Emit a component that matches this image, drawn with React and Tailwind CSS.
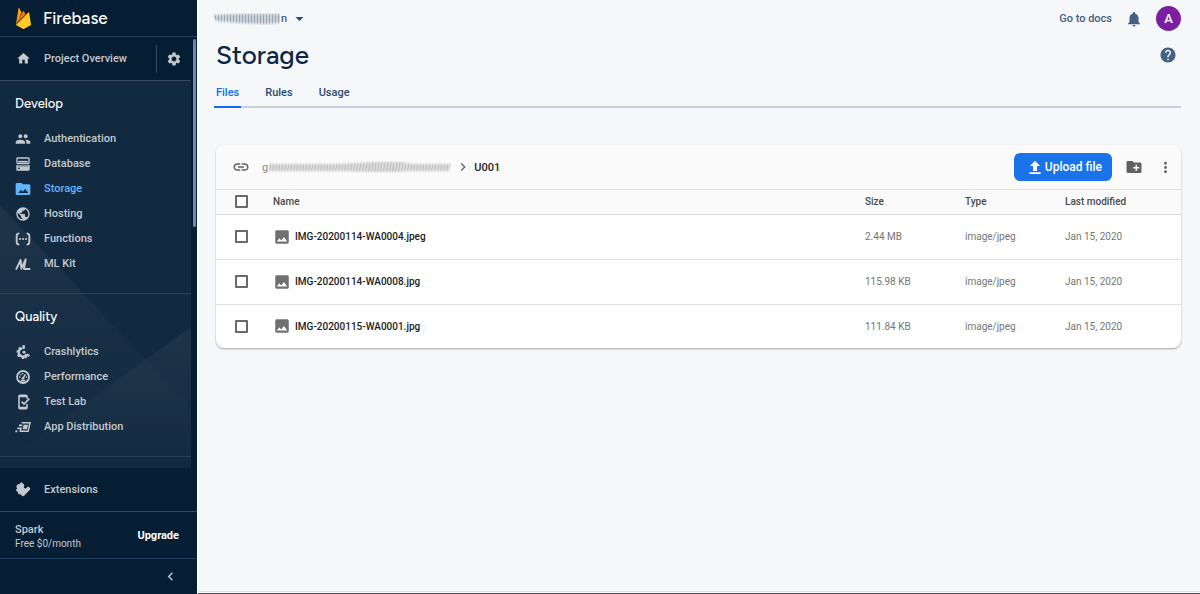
import {
  MdArrowDropDown,
  MdChevronLeft,
  MdChevronRight,
  MdCreateNewFolder,
  MdHelp,
  MdHome,
  MdImage,
  MdLink,
  MdMoreVert,
  MdNotifications,
  MdPeople,
  MdPublic,
  MdSettings,
} from 'react-icons/md'

function Icon({ children }) {
  return (
    <svg viewBox="0 0 24 24" width="16" height="16" fill="none" stroke="currentColor" strokeWidth="2" aria-hidden="true">
      {children}
    </svg>
  )
}

const DatabaseIcon = () => (
  <Icon>
    <rect x="3" y="3" width="18" height="8" rx="1" />
    <path d="M5 8.5h14" strokeWidth="2.5" />
    <rect x="2" y="13" width="20" height="9" rx="1.5" fill="currentColor" stroke="none" />
    <path d="M4 14.8h16" stroke="#122a40" strokeWidth="1" />
    <circle cx="6" cy="18.5" r="1.4" fill="#122a40" stroke="none" />
  </Icon>
)

const StorageIcon = () => (
  <Icon>
    <path d="M10 3H3a2 2 0 0 0-2 2v14a2 2 0 0 0 2 2h18a2 2 0 0 0 2-2V7a2 2 0 0 0-2-2h-9z" fill="currentColor" stroke="none" />
    <path d="M5 18l3.8-5 2.7 3.2L15.2 11.5 20 18z" fill="#122a40" stroke="none" />
  </Icon>
)

const FunctionsIcon = () => (
  <Icon>
    <path d="M6.5 3.5c-3 0-4 1.5-4 4v9c0 2.5 1 4 4 4M17.5 3.5c3 0 4 1.5 4 4v9c0 2.5-1 4-4 4" strokeWidth="2.8" />
    <path d="M6.3 12h2.4M10.8 12h2.4M15.3 12h2.4" strokeWidth="3" />
  </Icon>
)

const MlKitIcon = () => (
  <Icon>
    <path d="M1.5 20.5 8.500 6 9.500 19l6.500-14-2.500 14.500H23" strokeWidth="2.900" strokeLinejoin="round" />
  </Icon>
)

const CrashlyticsIcon = () => (
  <Icon>
    <path d="M11 6.500a6.200 6.200 0 1 0 6.500 8.500" strokeWidth="3.500" />
    <path d="M11.500 4.500h3M6.500 5l1 2M2.500 11h3M4 18.500l3-2M12 22.500v-4M17 21l-1.500-3M21.500 18 18 16" strokeWidth="3.600" />
    <path d="M13 1.500v6" strokeWidth="3" />
    <circle cx="13.500" cy="12.500" r="2.200" fill="currentColor" stroke="none" />
  </Icon>
)

const PerformanceIcon = () => (
  <Icon>
    <circle cx="12" cy="12" r="9" strokeWidth="2.700" />
    <path d="M8.500 17.500h7M12 14l3.500-6" strokeWidth="2.400" />
    <circle cx="12" cy="14" r="2" fill="currentColor" stroke="none" />
    <path d="M6 12h2M8 8l1.500 1.500M11.500 6v2M16.500 12H18" strokeWidth="2" />
  </Icon>
)

const TestLabIcon = () => (
  <Icon>
    <path d="M18 7V3.500A1.500 1.500 0 0 0 16.500 2h-9A1.500 1.500 0 0 0 6 3.500v17A1.500 1.500 0 0 0 7.500 22h9a1.500 1.500 0 0 0 1.500-1.500V15" strokeWidth="2.400" />
    <path d="M6 3.500h12M6 20.500h12" strokeWidth="2.500" />
    <path d="m10 11.500 3.500 3.500L21.500 7" strokeWidth="2.600" />
  </Icon>
)

const AppDistributionIcon = () => (
  <Icon>
    <path d="M10 5.500h12.500l-2.800 13H8l.7-3.500" strokeWidth="2.300" />
    <path d="M6 9.500h5M3.500 14H10" strokeWidth="2.400" />
    <path d="M13 8.500h6.500l-1.600 7h-6.500z" fill="currentColor" stroke="none" />
    <path d="M.5 18.500h3" strokeWidth="2.800" />
  </Icon>
)

const ExtensionsIcon = () => (
  <Icon>
    <path
      d="M3 5a2.400 2.400 0 0 1 4-1.200A2.600 2.600 0 0 1 12 2.500c1.200.3 2 1.200 2 2.500l-.8 2.500c.3 1.800 2 2.600 3.600 1.700l2-1.900c.8-.6 1.600-.4 2.200.3l1.500 1.800c.6.8.5 1.500-.1 2.200L13.700 20.800c-.9.900-2.300.9-3.200 0l-2.300-2.300c-1.800.8-4-.6-3.700-2.800L2 13.200c-.7-.8-.7-1.700 0-2.400l1.600-1.600C1.500 8.500 1.800 6 3 5z"
      fill="currentColor"
      stroke="none"
    />
  </Icon>
)

const UploadIcon = () => (
  <svg viewBox="0 0 24 24" width="16" height="16" fill="currentColor" aria-hidden="true">
    <path d="M12 2.500 4.500 10.500H9V18h6v-7.500h4.500zM3.500 20h17v2.500h-17z" />
  </svg>
)

const FirebaseLogo = () => (
  <svg viewBox="0 0 24 24" width="21" height="21" aria-hidden="true">
    <path fill="#ffa000" d="M3.316 19.365L6.255.461A.542.542 0 0 1 7.270.288l2.543 4.771z" />
    <path fill="#f57c00" d="M14.300 7.147l-1.820-3.482a.542.542 0 0 0-.96 0L3.530 17.984z" />
    <path fill="#ffca28" d="M20.684 19.364l-2.250-14a.54.54 0 0 0-.919-.295L3.316 19.365l7.856 4.427a1.621 1.621 0 0 0 1.588 0z" />
  </svg>
)

// hatched strokes that hide the private names
function Smudge({ id, width, color, slant = 0, path }) {
  return (
    <svg width={width} height="14" viewBox={`0 0 ${width} 14`} aria-hidden="true">
      <defs>
        <pattern id={id} width="3" height="14" patternUnits="userSpaceOnUse" patternTransform={`skewX(${slant})`}>
          <rect width="3" height="14" fill={color} opacity="0.3" />
          <rect width="1" height="14" fill={color} opacity="0.55" />
        </pattern>
        <filter id={`${id}-soft`}>
          <feGaussianBlur stdDeviation="0.4 0.9" />
        </filter>
      </defs>
      <path d={path} fill={`url(#${id})`} filter={`url(#${id}-soft)`} />
    </svg>
  )
}

const sections = [
  {
    title: 'Develop',
    items: [
      { name: 'Authentication', icon: <MdPeople size={16} /> },
      { name: 'Database', icon: <DatabaseIcon /> },
      { name: 'Storage', icon: <StorageIcon />, active: true },
      { name: 'Hosting', icon: <MdPublic size={16} /> },
      { name: 'Functions', icon: <FunctionsIcon /> },
      { name: 'ML Kit', icon: <MlKitIcon /> },
    ],
  },
  {
    title: 'Quality',
    items: [
      { name: 'Crashlytics', icon: <CrashlyticsIcon /> },
      { name: 'Performance', icon: <PerformanceIcon /> },
      { name: 'Test Lab', icon: <TestLabIcon /> },
      { name: 'App Distribution', icon: <AppDistributionIcon /> },
    ],
  },
]

const files = [
  { name: 'IMG-20200114-WA0004.jpeg', size: '2.44 MB', type: 'image/jpeg', modified: 'Jan 15, 2020' },
  { name: 'IMG-20200114-WA0008.jpg', size: '115.98 KB', type: 'image/jpeg', modified: 'Jan 15, 2020' },
  { name: 'IMG-20200115-WA0001.jpg', size: '111.84 KB', type: 'image/jpeg', modified: 'Jan 15, 2020' },
]

function SidebarBackdrop() {
  return (
    <svg className="absolute inset-0 h-full w-full" viewBox="0 0 191 387" preserveAspectRatio="none" aria-hidden="true">
      <defs>
        <linearGradient id="facet" x1="0" y1="0" x2="0" y2="1">
          <stop offset="0" stopColor="#fff" stopOpacity="0.045" />
          <stop offset="1" stopColor="#fff" stopOpacity="0" />
        </linearGradient>
      </defs>
      <path d="M0 124 191 327v60H0z" fill="url(#facet)" />
      <path d="M191 246v141H0v-4z" fill="url(#facet)" />
    </svg>
  )
}

function Sidebar() {
  return (
    <aside className="flex w-[198px] shrink-0 flex-col border-r border-white bg-[#051e34] text-[#c3c9cf]">
      <a href="#" className="flex h-[37px] items-center gap-[9px] border-b border-[#223f5c] pl-[13px] text-white">
        <FirebaseLogo />
        <span className="font-['Figtree','Lato',sans-serif] text-[17px] font-medium">Firebase</span>
      </a>

      <div className="flex">
        <nav className="min-w-0 flex-1">
          <div className="flex h-11 items-center border-b border-[#37495a]">
            <a href="#" className="flex flex-1 items-center gap-[13px] pl-[15px]">
              <span className="flex w-4 justify-center"><MdHome size={15} /></span>
              Project Overview
            </a>
            <button className="flex h-7 w-[35px] items-center justify-center border-l border-[#37495a]" aria-label="Settings">
              <MdSettings size={16} />
            </button>
          </div>

          <div className="relative bg-[#122a40] pb-[11px]">
            <SidebarBackdrop />
            {sections.map((section) => (
              <div key={section.title} className="relative border-b border-[#264059] pb-[17px]">
                <h2 className="h-[45px] pt-[11px] pl-[15px] font-['Figtree','Lato',sans-serif] text-[13px] leading-6 font-medium text-white">
                  {section.title}
                </h2>
                {section.items.map((item) => (
                  <a
                    key={item.name}
                    href="#"
                    className={`flex h-[25px] items-center gap-[13px] pl-[15px] ${item.active ? 'text-[#61b5fb]' : ''}`}
                  >
                    {item.icon}
                    {item.name}
                  </a>
                ))}
              </div>
            ))}
          </div>
        </nav>
        <div className="w-[6px] pt-[2px] pl-[2px]">
          <div className="h-[188px] w-[3px] rounded-full bg-[#6f87a5]" />
        </div>
      </div>

      <a href="#" className="flex flex-1 items-center gap-[13px] border-b border-[#37495a] pl-[15px]">
        <ExtensionsIcon />
        Extensions
      </a>
      <div className="flex h-[47px] items-center justify-between border-b border-[#223f5c] pr-[18px] pl-[15px]">
        <div>
          <div>Spark</div>
          <div className="text-[10px] leading-3 font-normal">Free $0/month</div>
        </div>
        <button className="font-bold text-white">Upgrade</button>
      </div>
      <button className="flex h-[35px] items-center justify-end pr-[18px]" aria-label="Collapse">
        <MdChevronLeft size={17} />
      </button>
    </aside>
  )
}

function Checkbox({ label }) {
  return (
    <input
      type="checkbox"
      aria-label={label}
      className="block size-[13px] appearance-none rounded-[1px] border-2 border-[#6a6a6a] bg-white checked:bg-[#616161]"
    />
  )
}

function FileTable() {
  return (
    <table className="w-full table-fixed text-left text-[10px]">
      <colgroup>
        <col className="w-[57px]" />
        <col />
        <col className="w-[100px]" />
        <col className="w-[100px]" />
        <col className="w-[116px]" />
      </colgroup>
      <thead className="bg-[#fafafa] text-[#4a4a4a]">
        <tr className="h-6 border-b border-[#dcdcdc]">
          <th className="pl-[19px]"><Checkbox label="Select all" /></th>
          <th className="font-medium">Name</th>
          <th className="font-medium">Size</th>
          <th className="font-medium">Type</th>
          <th className="font-medium">Last modified</th>
        </tr>
      </thead>
      <tbody className="font-normal text-[#757575]">
        {files.map((file) => (
          <tr key={file.name} className="h-[45px] border-b border-[#e0e0e0] last:h-11 last:border-0">
            <td className="pl-[19px]"><Checkbox label={file.name} /></td>
            <td>
              <a href="#" className="flex items-center gap-1 font-medium text-[#212121]">
                <MdImage size={18} className="text-[#707070]" />
                {file.name}
              </a>
            </td>
            <td>{file.size}</td>
            <td>{file.type}</td>
            <td>{file.modified}</td>
          </tr>
        ))}
      </tbody>
    </table>
  )
}

export default function App() {
  return (
    <div className="flex min-h-screen bg-[#f5f7f9] font-['Roboto',sans-serif] text-[11px] leading-[17px] font-medium">
      <Sidebar />

      <div className="flex min-w-0 flex-1 flex-col">
        <main className="flex-1 pr-[19px] pl-[18px]">
          <header className="flex h-[37px] items-center justify-between text-[#446084]">
            <button className="-ml-1 flex items-center">
              <Smudge id="project" width={69} color="#6f7f95" path="M1 3 28 2h40v9l-16 1-26-1L4 9z" />
              n
              <MdArrowDropDown size={19} className="ml-[3px] text-[#2c4a70]" />
            </button>
            <div className="flex items-center gap-[13px]">
              <a href="#">Go to docs</a>
              <button aria-label="Notifications"><MdNotifications size={18} /></button>
              <button className="size-[25px] rounded-full bg-[#7b1fa2] text-[13px] text-white">A</button>
            </div>
          </header>

          <div className="flex h-[35px] items-center justify-between">
            <h1 className="font-['Figtree','Lato',sans-serif] text-[26px] leading-8 font-medium text-[#0b2747]">Storage</h1>
            <button className="mr-1 text-[#446084]" aria-label="Help"><MdHelp size={18} /></button>
          </div>

          <nav className="-ml-0.5 flex h-9 gap-[22px] border-b-2 border-[#c5cfde] text-[#2c4a70]">
            <a href="#" className="-mb-0.5 border-b-2 border-[#0f6af5] px-0.5 pt-3 text-[#0f6af5]">Files</a>
            <a href="#" className="px-0.5 pt-3">Rules</a>
            <a href="#" className="px-0.5 pt-3">Usage</a>
          </nav>

          <section className="mt-[37px] overflow-hidden rounded-lg bg-white shadow-[0_1px_2px_rgba(0,0,0,0.35)]">
            <div className="flex h-[45px] items-center border-b border-[#e0e0e0] bg-[#fafafa] pr-[7px] pl-4">
              <MdLink size={18} className="text-[#616161]" />
              <a href="#" className="ml-3 flex items-center font-normal text-[#8a8a8a]">
                g
                <Smudge
                  id="bucket"
                  width={184}
                  color="#9a9a9a"
                  slant={-10}
                  path="M1 4h70l35-2h26l14 2h37l-2 7h-40l-14 1h-22l-34-1H1z"
                />
              </a>
              <MdChevronRight size={16} className="mx-[3px] text-[#616161]" />
              <span className="text-[#212121]">U001</span>
              <button className="ml-auto flex h-7 items-center gap-0.5 rounded-md bg-[#1a73e8] pr-2.5 pl-[13px] text-xs text-white">
                <UploadIcon />
                Upload file
              </button>
              <button className="ml-[13px] text-[#616161]" aria-label="New folder"><MdCreateNewFolder size={18} /></button>
              <button className="ml-[14px] text-[#616161]" aria-label="More"><MdMoreVert size={17} /></button>
            </div>
            <FileTable />
          </section>
        </main>
        <div className="h-[3px] border-t border-b border-t-[#dcdee0] border-b-[#4c4c4f] bg-white" />
      </div>
    </div>
  )
}
